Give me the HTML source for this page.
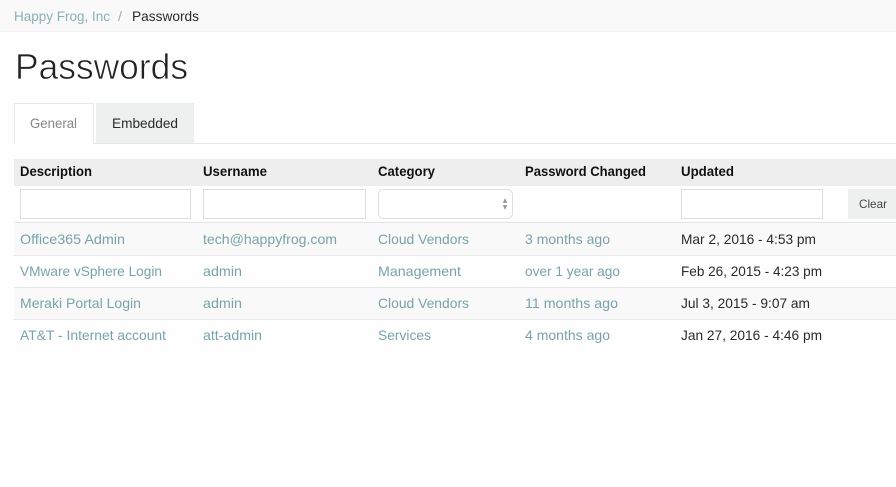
<!DOCTYPE html>
<html><head><meta charset="utf-8"><style>
html,body{margin:0;padding:0;background:#fefefe;width:896px;height:487px;overflow:hidden}
svg{display:block;position:absolute;left:0;top:0}
text{font-family:"Liberation Sans",sans-serif;font-size:14px}
.l{fill:#78a3ab}.d{fill:#2a2a2a}.h{font-weight:bold;fill:#111}
</style></head><body>
<svg width="896" height="487" viewBox="0 0 896 487">
<rect x="0" y="0" width="896" height="31" fill="#f9f9f9"/>
<rect x="0" y="31" width="896" height="1" fill="#f3f3f3"/>
<text x="14" y="21" fill="#8ab0b7" textLength="96" lengthAdjust="spacingAndGlyphs">Happy Frog, Inc</text>
<text x="118" y="21" fill="#aaa">/</text>
<text x="132" y="21" class="d" textLength="67" lengthAdjust="spacingAndGlyphs">Passwords</text>
<text x="15" y="79" style="font-size:36px" fill="#222" stroke="#fefefe" stroke-width=".7" textLength="173" lengthAdjust="spacingAndGlyphs">Passwords</text>

<rect x="14" y="143" width="882" height="1" fill="#e6e6e6"/>
<path d="M14.500 144V103.500H93.500V144" fill="#fefefe" stroke="#e8e8e8"/>
<rect x="15" y="143" width="78" height="1" fill="#fefefe"/>
<rect x="96" y="103" width="98" height="40" fill="#eef0f0"/>
<text x="30" y="128" fill="#888" textLength="47" lengthAdjust="spacingAndGlyphs">General</text>
<text x="112" y="128" class="d" textLength="66" lengthAdjust="spacingAndGlyphs">Embedded</text>

<rect x="14" y="159" width="882" height="27" fill="#eeeeee"/>
<text x="20" y="176" class="h" textLength="72" lengthAdjust="spacingAndGlyphs">Description</text>
<text x="203" y="176" class="h" textLength="64" lengthAdjust="spacingAndGlyphs">Username</text>
<text x="378" y="176" class="h" textLength="57" lengthAdjust="spacingAndGlyphs">Category</text>
<text x="525" y="176" class="h" textLength="121" lengthAdjust="spacingAndGlyphs">Password Changed</text>
<text x="681" y="176" class="h" textLength="53" lengthAdjust="spacingAndGlyphs">Updated</text>

<rect x="20.500" y="189.500" width="170" height="29" fill="#fff" stroke="#dedede"/>
<rect x="203.500" y="189.500" width="162" height="29" fill="#fff" stroke="#dedede"/>
<rect x="378.500" y="189.500" width="134" height="29" rx="5" fill="#fff" stroke="#dedede"/>
<path d="M502.800 203L505 198L507.200 203Z M502.800 205L505 210L507.200 205Z" fill="#999"/>
<rect x="681.500" y="189.500" width="141" height="29" fill="#fff" stroke="#dedede"/>
<rect x="848" y="189" width="48" height="30" fill="#eef0f0"/>
<text x="859" y="208" style="font-size:12px" fill="#444" textLength="28" lengthAdjust="spacingAndGlyphs">Clear</text>

<rect x="14" y="222" width="882" height="1" fill="#e4e4e4"/>
<rect x="14" y="223" width="882" height="32" fill="#f9f9f9"/>
<rect x="14" y="255" width="882" height="1" fill="#e9e9e9"/>
<rect x="14" y="287" width="882" height="1" fill="#e9e9e9"/>
<rect x="14" y="288" width="882" height="31" fill="#f9f9f9"/>
<rect x="14" y="319" width="882" height="1" fill="#e9e9e9"/>

<text x="20" y="244" class="l" textLength="105" lengthAdjust="spacingAndGlyphs">Office365 Admin</text>
<text x="203" y="244" class="l" textLength="134" lengthAdjust="spacingAndGlyphs">tech@happyfrog.com</text>
<text x="378" y="244" class="l" textLength="91" lengthAdjust="spacingAndGlyphs">Cloud Vendors</text>
<text x="525" y="244" class="l" textLength="85" lengthAdjust="spacingAndGlyphs">3 months ago</text>
<text x="681" y="244" class="d" textLength="135" lengthAdjust="spacingAndGlyphs">Mar 2, 2016 - 4:53 pm</text>

<text x="20" y="276" class="l" textLength="142" lengthAdjust="spacingAndGlyphs">VMware vSphere Login</text>
<text x="203" y="276" class="l" textLength="39" lengthAdjust="spacingAndGlyphs">admin</text>
<text x="378" y="276" class="l" textLength="83" lengthAdjust="spacingAndGlyphs">Management</text>
<text x="525" y="276" class="l" textLength="95" lengthAdjust="spacingAndGlyphs">over 1 year ago</text>
<text x="681" y="276" class="d" textLength="141" lengthAdjust="spacingAndGlyphs">Feb 26, 2015 - 4:23 pm</text>

<text x="20" y="308" class="l" textLength="121" lengthAdjust="spacingAndGlyphs">Meraki Portal Login</text>
<text x="203" y="308" class="l" textLength="39" lengthAdjust="spacingAndGlyphs">admin</text>
<text x="378" y="308" class="l" textLength="91" lengthAdjust="spacingAndGlyphs">Cloud Vendors</text>
<text x="525" y="308" class="l" textLength="93" lengthAdjust="spacingAndGlyphs">11 months ago</text>
<text x="681" y="308" class="d" textLength="129" lengthAdjust="spacingAndGlyphs">Jul 3, 2015 - 9:07 am</text>

<text x="20" y="340" class="l" textLength="146" lengthAdjust="spacingAndGlyphs">AT&amp;T - Internet account</text>
<text x="203" y="340" class="l" textLength="59" lengthAdjust="spacingAndGlyphs">att-admin</text>
<text x="378" y="340" class="l" textLength="53" lengthAdjust="spacingAndGlyphs">Services</text>
<text x="525" y="340" class="l" textLength="85" lengthAdjust="spacingAndGlyphs">4 months ago</text>
<text x="681" y="340" class="d" textLength="141" lengthAdjust="spacingAndGlyphs">Jan 27, 2016 - 4:46 pm</text>
</svg>
</body></html>
